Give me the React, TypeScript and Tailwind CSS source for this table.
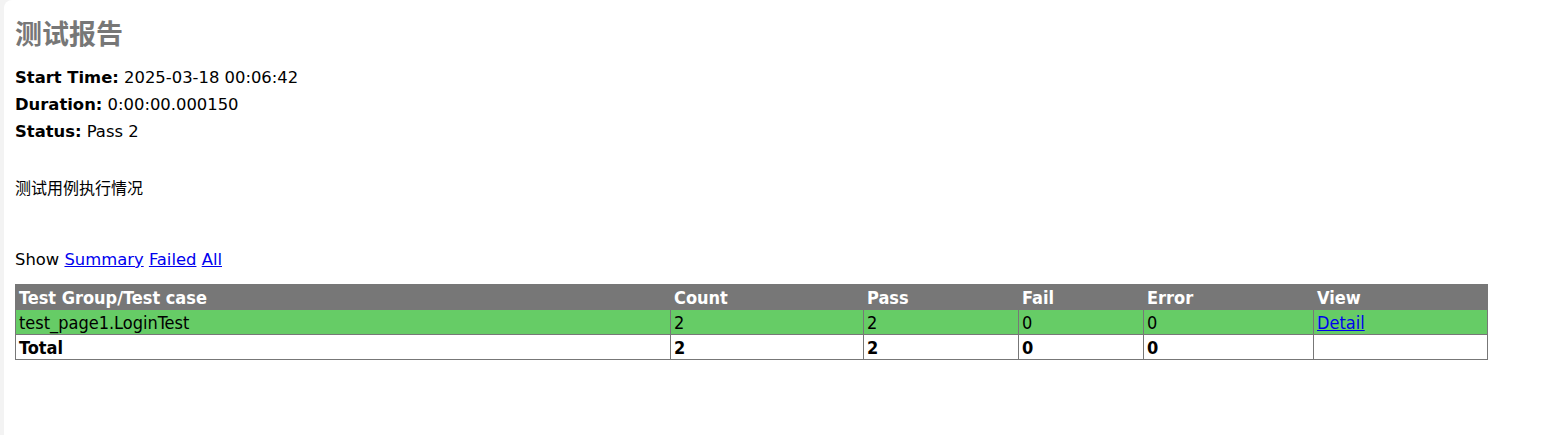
import React from "react";

const rows = [
  { name: "test_page1.LoginTest", count: 2, pass: 2, fail: 0, error: 0 },
];

function App() {
  const cell = "border border-[#777] px-[3px] pt-[2px] h-[25px] align-middle";

  return (
    <div className="min-h-[435px] bg-[#f3f3f3] pl-[4px] font-['DejaVu_Sans','Noto_Sans_CJK_SC',sans-serif] text-black">
      <div className="min-h-[435px] bg-white rounded-tl-[8px] pl-[11px] pt-[17px]">
        <h1 className="text-[27px] leading-[32px] font-bold text-[#777] font-['Noto_Sans_CJK_SC',sans-serif]">
          测试报告
        </h1>
        <div className="mt-[15px] text-[16.4px] leading-[27px]">
          <p>
            <strong>Start Time:</strong> 2025-03-18 00:06:42
          </p>
          <p>
            <strong>Duration:</strong> 0:00:00.000150
          </p>
          <p>
            <strong>Status:</strong> Pass 2
          </p>
        </div>
        <p className="mt-[32px] text-[16px] leading-[20px] font-['Noto_Sans_CJK_SC',sans-serif]">
          测试用例执行情况
        </p>
        <p className="mt-[53px] text-[16.4px] leading-[20px]">
          Show{" "}
          <a href="#" className="text-[#0000ee] underline">
            Summary
          </a>{" "}
          <a href="#" className="text-[#0000ee] underline">
            Failed
          </a>{" "}
          <a href="#" className="text-[#0000ee] underline">
            All
          </a>
        </p>
        <table className="mt-[14px] w-[1472px] table-fixed border-collapse border border-[#777] text-[18px] leading-[20px] font-['DejaVu_Sans_Condensed','DejaVu_Sans',sans-serif]">
          <colgroup>
            <col className="w-[655px]" />
            <col className="w-[193px]" />
            <col className="w-[155px]" />
            <col className="w-[125px]" />
            <col className="w-[170px]" />
            <col className="w-[174px]" />
          </colgroup>
          <thead>
            <tr className="bg-[#777] text-white font-bold text-left">
              <th className={cell}>Test Group/Test case</th>
              <th className={cell}>Count</th>
              <th className={cell}>Pass</th>
              <th className={cell}>Fail</th>
              <th className={cell}>Error</th>
              <th className={cell}>View</th>
            </tr>
          </thead>
          <tbody>
            {rows.map((r) => (
              <tr key={r.name} className="bg-[#66cc66]">
                <td className={cell}>{r.name}</td>
                <td className={cell}>{r.count}</td>
                <td className={cell}>{r.pass}</td>
                <td className={cell}>{r.fail}</td>
                <td className={cell}>{r.error}</td>
                <td className={cell}>
                  <a href="#" className="text-[#0000ee] underline">
                    Detail
                  </a>
                </td>
              </tr>
            ))}
            <tr className="bg-white font-bold">
              <td className={cell}>Total</td>
              <td className={cell}>2</td>
              <td className={cell}>2</td>
              <td className={cell}>0</td>
              <td className={cell}>0</td>
              <td className={cell}>&nbsp;</td>
            </tr>
          </tbody>
        </table>
      </div>
    </div>
  );
}

export default App;
